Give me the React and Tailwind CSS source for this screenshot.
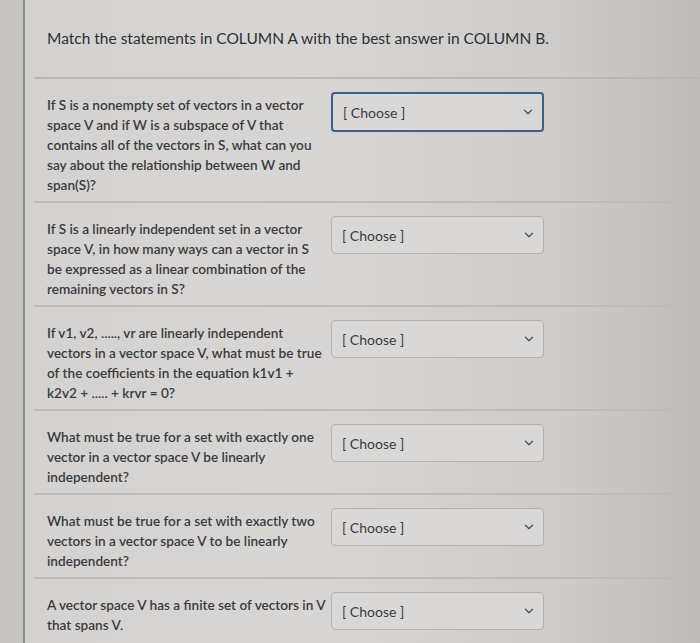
import { ChevronDown } from 'lucide-react';

const questions = [
  {
    id: 1,
    text: 'If S is a nonempty set of vectors in a vector space V and if W is a subspace of V that contains all of the vectors in S, what can you say about the relationship between W and span(S)?',
    focused: true,
  },
  {
    id: 2,
    text: 'If S is a linearly independent set in a vector space V, in how many ways can a vector in S be expressed as a linear combination of the remaining vectors in S?',
  },
  {
    id: 3,
    text: 'If v1, v2, ....., vr are linearly independent vectors in a vector space V, what must be true of the coefficients in the equation k1v1 + k2v2 + ..... + krvr = 0?',
  },
  {
    id: 4,
    text: 'What must be true for a set with exactly one vector in a vector space V be linearly independent?',
  },
  {
    id: 5,
    text: 'What must be true for a set with exactly two vectors in a vector space V to be linearly independent?',
  },
  {
    id: 6,
    text: 'A vector space V has a finite set of vectors in V that spans V.',
    wide: true,
  },
];

function ChooseSelect({ focused }) {
  return (
    <div
      className={`flex w-[213px] shrink-0 items-center justify-between rounded-[4px] bg-[#d9d8d6] pl-[10px] pr-[7px] ${
        focused ? 'h-[40px] border-2 border-[#3e5f8c]' : 'h-[38px] border border-[#b3b2b0]'
      }`}
    >
      <span className="text-[14px] text-[#3a3c3f]">[ Choose ]</span>
      <ChevronDown size={14} strokeWidth={2.5} className="text-[#55585c]" />
    </div>
  );
}

export default function App() {
  return (
    <div
      className="flex h-[643px] w-[700px] overflow-hidden bg-[linear-gradient(90deg,#d3d2d0_0%,#d7d6d4_45%,#cdcccb_80%,#bdbcbb_100%)]"
      style={{ fontFamily: 'Lato, "Open Sans", sans-serif' }}
    >
      {/* left rail */}
      <div className="w-[25px] shrink-0 border-r-2 border-[#8e8e8c] bg-[#c6c5c3]" />

      <div className="flex min-w-0 flex-1 flex-col pl-[9px]">
        <div className="border-b-2 border-[#b9b8b6] pb-[28px] pl-[13px] pt-[27px]">
          <h1 className="text-[15.5px] leading-[22px] text-[#2e3033]">
            Match the statements in COLUMN A with the best answer in COLUMN B.
          </h1>
        </div>

        {questions.map((q, i) => (
          <div
            key={q.id}
            className={`flex items-start pl-[13px] pt-[13px] ${
              i < questions.length - 1 ? 'border-b-2 border-[#bdbcba] pb-[6px]' : 'pb-[4px]'
            } ${q.wide ? 'gap-[2px]' : 'gap-[8px]'}`}
          >
            <p
              className={`shrink-0 pt-[3px] text-[13.6px] font-semibold leading-[20px] text-[#3a3b3d] ${
                q.wide ? 'w-[282px]' : 'w-[276px]'
              }`}
            >
              {q.text}
            </p>
            <ChooseSelect focused={q.focused} />
          </div>
        ))}
      </div>
    </div>
  );
}
